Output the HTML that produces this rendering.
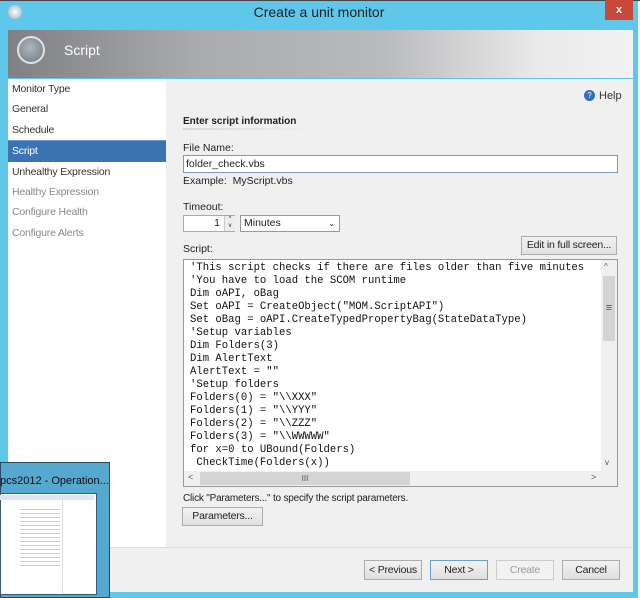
<!DOCTYPE html>
<html><head><style>
body{margin:0;width:640px;height:598px;overflow:hidden;background:#e8e8e8;font-family:"Liberation Sans",sans-serif;font-size:11px;color:#222;position:relative}
.a{position:absolute}
.btn{position:absolute;background:linear-gradient(#f2f2f2,#e0e0e0);border:1px solid #acacac;text-align:center;font-size:10.5px;color:#222;box-sizing:border-box;letter-spacing:-0.2px}
.nav div{height:20.4px;line-height:20px;padding-left:4px;color:#333;font-size:10.5px;letter-spacing:-0.2px}
pre{margin:0;font-family:"Liberation Mono",monospace;font-size:10.6px;line-height:13px;color:#111}
</style></head><body>
<div class="a" style="left:0;top:0;width:638px;height:598px;background:#5ec7ea"></div>
<div class="a" style="left:638px;top:0;width:2px;height:598px;background:#f4f4f4"></div>
<div class="a" style="left:0;top:0;width:640px;height:1px;background:#444"></div>
<div class="a" style="left:8px;top:5px;width:14px;height:14px;border-radius:50%;background:radial-gradient(#fff,#9ab)"></div>
<div class="a" style="left:0;top:4px;width:638px;text-align:center;font-size:14px;color:#222">Create a unit monitor</div>
<div class="a" style="left:605px;top:0;width:28px;height:20px;background:#c9483c;color:#fff;font-weight:bold;text-align:center;line-height:20px;font-size:11px">x</div>
<div class="a" style="left:8px;top:30px;width:625px;height:48px;background:linear-gradient(90deg,#7e8083 0%,#a9abad 30%,#b9babc 60%,#eaeaea 85%,#f2f2f2)"></div>
<div class="a" style="left:17px;top:36px;width:28px;height:28px;border-radius:50%;border:2px solid #dfe3e6;background:radial-gradient(circle at 45% 40%,#aeb6bd,#6e7880);box-sizing:border-box"></div>
<div class="a" style="left:64px;top:42px;color:#fff;font-size:14px">Script</div>
<div class="a nav" style="left:8px;top:79px;width:158px;height:468px;background:#fff">
<div>Monitor Type</div><div>General</div><div>Schedule</div><div style="background:#3a74b3;color:#fff;border-top:1px solid #6a9ad0">Script</div><div>Unhealthy Expression</div><div style="color:#888">Healthy Expression</div><div style="color:#888">Configure Health</div><div style="color:#888">Configure Alerts</div></div>
<div class="a" style="left:166px;top:79px;width:467px;height:468px;background:#f0f0f0"></div>
<div class="a" style="left:8px;top:547px;width:625px;height:44px;background:#f0f0f0;border-top:1px solid #dcdcdc"></div>
<div class="a" style="left:584px;top:90px;width:11px;height:11px;border-radius:50%;background:#2f6fc2;color:#fff;font-size:8px;text-align:center;line-height:11px">?</div>
<div class="a" style="left:599px;top:90px;color:#333">Help</div>
<div class="a" style="left:183px;top:116px;font-weight:bold;font-size:10px">Enter script information</div>
<div class="a" style="left:183px;top:128px;width:130px;height:2px;background:linear-gradient(90deg,#d8d8d8,#f0f0f0)"></div>
<div class="a" style="left:183px;top:142px;font-size:10.5px">File Name:</div>
<div class="a" style="left:183px;top:155px;width:435px;height:18px;background:#fff;border:1px solid #7a9ab8;box-sizing:border-box;padding:2px;font-size:10.5px">folder_check.vbs</div>
<div class="a" style="left:183px;top:175px;font-size:10.5px">Example:&nbsp; MyScript.vbs</div>
<div class="a" style="left:183px;top:201px;font-size:10.5px">Timeout:</div>
<div class="a" style="left:183px;top:215px;width:52px;height:17px;background:#fff;border:1px solid #aaa;box-sizing:border-box;text-align:right;padding-right:14px;font-size:10.5px;line-height:15px">1</div>
<div class="a" style="left:224px;top:216px;width:10px;height:15px;background:#eee;border-left:1px solid #ccc;font-size:6px;line-height:7px;text-align:center">^<br>v</div>
<div class="a" style="left:240px;top:215px;width:100px;height:17px;background:#fff;border:1px solid #999;box-sizing:border-box;padding-left:3px;line-height:15px;font-size:10.5px">Minutes<span style="position:absolute;right:4px;font-size:8px">&#8964;</span></div>
<div class="a" style="left:183px;top:243px;font-size:10.5px">Script:</div>
<div class="btn" style="left:521px;top:236px;width:96px;height:19px;line-height:17px">Edit in full screen...</div>
<div class="a" style="left:183px;top:259px;width:435px;height:228px;background:#fff;border:1px solid #999;box-sizing:border-box"></div>
<pre class="a" style="left:190px;top:262px">'This script checks if there are files older than five minutes
'You have to load the SCOM runtime
Dim oAPI, oBag
Set oAPI = CreateObject("MOM.ScriptAPI")
Set oBag = oAPI.CreateTypedPropertyBag(StateDataType)
'Setup variables
Dim Folders(3)
Dim AlertText
AlertText = ""
'Setup folders
Folders(0) = "\\XXX"
Folders(1) = "\\YYY"
Folders(2) = "\\ZZZ"
Folders(3) = "\\WWWWW"
for x=0 to UBound(Folders)
 CheckTime(Folders(x))</pre>
<div class="a" style="left:601px;top:260px;width:16px;height:211px;background:#f0f0f0"></div>
<div class="a" style="left:603px;top:276px;width:12px;height:65px;background:#d4d4d4;text-align:center;color:#555;line-height:65px">≡</div>
<div class="a" style="left:604px;top:262px;font-size:8px;color:#555">^</div>
<div class="a" style="left:605px;top:458px;font-size:8px;color:#555">v</div>
<div class="a" style="left:184px;top:471px;width:433px;height:15px;background:#f0f0f0"></div>
<div class="a" style="left:200px;top:472px;width:210px;height:13px;background:#d4d4d4;text-align:center;font-size:8px;line-height:13px;color:#555">III</div>
<div class="a" style="left:188px;top:472px;font-size:9px;color:#555">&lt;</div>
<div class="a" style="left:591px;top:472px;font-size:9px;color:#555">&gt;</div>
<div class="a" style="left:183px;top:493px;font-size:10px;letter-spacing:-0.2px">Click "Parameters..." to specify the script parameters.</div>
<div class="btn" style="left:182px;top:507px;width:81px;height:19px;line-height:17px">Parameters...</div>
<div class="btn" style="left:364px;top:560px;width:58px;height:20px;line-height:18px">&lt; Previous</div>
<div class="btn" style="left:430px;top:560px;width:58px;height:20px;line-height:18px;border-color:#6aa0d0">Next &gt;</div>
<div class="btn" style="left:496px;top:560px;width:58px;height:20px;line-height:18px;color:#999;background:#f2f2f2;border-color:#ccc">Create</div>
<div class="btn" style="left:562px;top:560px;width:58px;height:20px;line-height:18px">Cancel</div>
<div class="a" style="left:0;top:462px;width:110px;height:136px;background:#55a8cf;border:1px solid #2a4a6a;box-sizing:border-box"></div>
<div class="a" style="left:0;top:475px;font-size:11px;color:#111;white-space:nowrap">pcs2012 - Operation...</div>
<div class="a" style="left:0;top:493px;width:97px;height:102px;background:#fff;border:1px solid #3a5a7a;box-sizing:border-box"></div>
<div class="a" style="left:0;top:495px;width:94px;height:5px;background:#dde6f0"></div>
<div class="a" style="left:20px;top:506px;width:40px;height:60px;background:repeating-linear-gradient(#fff 0 3px,#ccc 3px 4px)"></div>
<div class="a" style="left:62px;top:500px;width:1px;height:94px;background:#ddd"></div>
</body></html>
